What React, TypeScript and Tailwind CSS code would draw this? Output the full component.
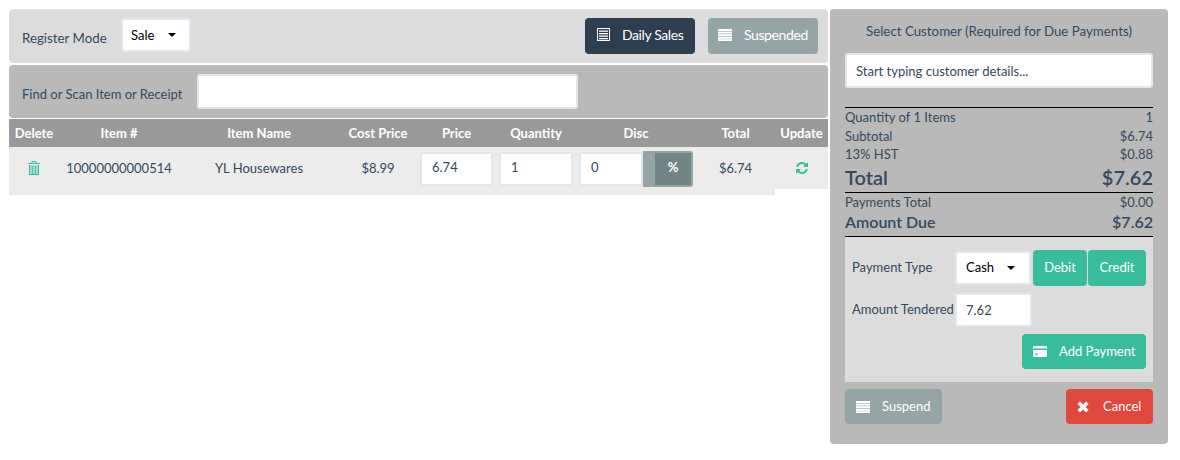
import React from 'react'

const BarsIcon = () => (
  <svg className="w-[14px] h-[12px]" viewBox="0 0 14 12" fill="white" aria-hidden="true">
    <rect x="0" y="0" width="14" height="2" />
    <rect x="0" y="2.6" width="14" height="2" />
    <rect x="0" y="5.2" width="14" height="2" />
    <rect x="0" y="7.8" width="14" height="2" />
    <rect x="0" y="10.2" width="14" height="1.8" />
  </svg>
)

const ListIcon = () => (
  <svg className="w-[13px] h-[13px]" viewBox="0 0 13 13" aria-hidden="true">
    <rect x="0.5" y="0.5" width="12" height="12" fill="none" stroke="white" />
    <rect x="2" y="2.5" width="9" height="1.3" fill="white" />
    <rect x="2" y="5" width="9" height="1.3" fill="white" />
    <rect x="2" y="7.5" width="9" height="1.3" fill="white" />
    <rect x="2" y="10" width="9" height="1.3" fill="white" />
  </svg>
)

const CardIcon = () => (
  <svg className="w-[14px] h-[11px]" viewBox="0 0 14 11" aria-hidden="true">
    <path fill="white" d="M1 0h12a1 1 0 0 1 1 1v1.5H0V1a1 1 0 0 1 1-1zM0 4h14v6a1 1 0 0 1-1 1H1a1 1 0 0 1-1-1z" />
    <rect x="2" y="7.5" width="3" height="1.2" fill="#38bc9c" />
  </svg>
)

const TrashIcon = () => (
  <svg className="w-[12px] h-[14px]" viewBox="0 0 12 14" aria-hidden="true">
    <path fill="none" stroke="#38bc9c" d="M4 2V.5h4V2" />
    <rect x="0" y="2" width="12" height="1" fill="#38bc9c" />
    <rect x="1" y="4" width="10" height="10" fill="#9fdcd8" />
    <path fill="#38bc9c" d="M1 4h1v10H1zM10 4h1v10h-1zM1 13h10v1H1z" />
    <path fill="#4fc4b4" d="M4 5h1v8H4zM7 5h1v8H7z" />
  </svg>
)

const RefreshIcon = () => (
  <svg className="w-[14px] h-[14px]" viewBox="0 0 1792 1792" fill="#38bc9c" aria-hidden="true">
    <path d="M1639 1056q0 5-1 7-64 268-268 434.5t-478 166.5q-146 0-282.5-55t-243.5-157l-129 129q-19 19-45 19t-45-19-19-45v-448q0-26 19-45t45-19h448q26 0 45 19t19 45-19 45l-137 137q71 66 161 102t187 36q134 0 250-65t186-179q11-17 53-117 8-23 30-23h192q13 0 22.5 9.5t9.5 22.5zm25-800v448q0 26-19 45t-45 19h-448q-26 0-45-19t-19-45 19-45l138-138q-148-137-349-137-134 0-250 65t-186 179q-11 17-53 117-8 23-30 23h-199q-13 0-22.5-9.5t-9.5-22.5v-7q65-268 270-434.5t480-166.5q146 0 284 55.5t245 156.5l130-129q19-19 45-19t45 19 19 45z" />
  </svg>
)

const CrossIcon = () => (
  <svg className="w-[12px] h-[12px]" viewBox="0 0 12 12" fill="none" stroke="white" strokeWidth={3.6} aria-hidden="true">
    <path d="M1.7 1.7l8.6 8.6M10.3 1.7l-8.6 8.6" />
  </svg>
)

const Caret = () => (
  <span className="w-0 h-0 border-x-[4px] border-x-transparent border-t-[4px] border-t-black" />
)

const SummaryRow = ({ label, value, className }: { label: string; value: string; className: string }) => (
  <div className={`flex justify-between ${className}`}>
    <span>{label}</span>
    <span>{value}</span>
  </div>
)

const headers = [
  { label: 'Delete', w: 'w-[50px]' },
  { label: 'Item #', w: 'w-[120px]' },
  { label: 'Item Name', w: 'w-[160px]' },
  { label: 'Cost Price', w: 'w-[78px]' },
  { label: 'Price', w: 'w-[79px]' },
  { label: 'Quantity', w: 'w-[80px]' },
  { label: 'Disc', w: 'w-[120px]' },
  { label: 'Total', w: 'w-[79px]' },
  { label: 'Update', w: 'w-[53px]' },
]

export default function App() {
  return (
    <div className="flex items-start w-[1180px] h-[460px] bg-white pt-[9px] pl-[9px] text-[13px] text-[#34495e] font-['Lato','Open_Sans',sans-serif]">
      <div className="w-[819px]">
        <div className="flex items-center justify-between h-[54px] pl-[13px] pr-[10px] bg-[#dcdcdc] rounded-[4px] border-t border-[#e4e4e4]">
          <div className="flex items-center">
            <span className="mt-[4px] w-[99px] text-[13.3px]">Register Mode</span>
            <div className="flex items-center justify-between w-[70px] h-[34px] pl-[8px] pr-[13px] -mt-[3px] bg-white border-2 border-[#e2e6ef] rounded-[3px] text-black">
              <span className="mt-[1px]">Sale</span>
              <Caret />
            </div>
          </div>
          <div className="flex items-center gap-[13px] -mt-[1px] text-white text-[14px] tracking-[-0.4px]">
            <button className="flex items-center w-[110px] h-[36px] pl-[12px] pb-[3px] bg-[#2c3e50] rounded-[4px]">
              <ListIcon />
              <span className="ml-[12px]">Daily Sales</span>
            </button>
            <button className="flex items-center w-[110px] h-[36px] pl-[10px] pb-[3px] bg-[#95a5a6] rounded-[4px]">
              <BarsIcon />
              <span className="ml-[12px]">Suspended</span>
            </button>
          </div>
        </div>

        <div className="flex items-center h-[53px] mt-[2px] pl-[13px] bg-[#b9b9b9] rounded-[4px]">
          <span className="w-[175px] mt-[6px]">Find or Scan Item or Receipt</span>
          <input className="w-[381px] h-[35px] bg-white border-2 border-[#e2e6ef] rounded-[3px]" />
        </div>

        <div className="flex items-center h-[28px] mt-[1px] pt-[1px] bg-[#999999] text-white font-bold">
          {headers.map((h) => (
            <div key={h.label} className={`${h.w} text-center`}>{h.label}</div>
          ))}
        </div>

        <div className="flex items-start">
          <div className="flex items-center w-[766px] h-[48px] pb-[7px] bg-[#ececec]">
            <div className="w-[50px] flex justify-center"><TrashIcon /></div>
            <div className="w-[120px] pt-[2px] text-center">10000000000514</div>
            <div className="w-[160px] pt-[2px] text-center">YL Housewares</div>
            <div className="w-[78px] pt-[2px] text-center">$8.99</div>
            <div className="w-[79px] flex justify-center mt-[3px]">
              <div className="w-[73px] h-[34px] pl-[10px] pb-[2px] flex items-center bg-white border-2 border-[#e2e6ef] rounded-[3px]">6.74</div>
            </div>
            <div className="w-[80px] flex justify-center mt-[3px]">
              <div className="w-[74px] h-[34px] pl-[10px] pb-[2px] flex items-center bg-white border-2 border-[#e2e6ef] rounded-[3px]">1</div>
            </div>
            <div className="w-[120px] flex pl-[3px] mt-[2px]">
              <div className="w-[64px] h-[34px] mt-[1px] pl-[10px] pb-[2px] flex items-center bg-white border-2 border-[#e2e6ef] rounded-l-[3px]">0</div>
              <div className="w-[50px] h-[36px] pl-[12px] py-[2px] pr-[2px] bg-[#95a5a6] rounded-r-[3px]">
                <div className="flex items-center justify-center h-full pb-[2px] bg-[#718585] text-white font-bold">%</div>
              </div>
            </div>
            <div className="w-[79px] pt-[2px] text-center">$6.74</div>
          </div>
          <div className="flex items-center justify-center w-[53px] h-[42px] pb-[1px] bg-[#ececec]">
            <RefreshIcon />
          </div>
        </div>
      </div>

      <div className="w-[338px] h-[435px] ml-[2px] px-[15px] bg-[#b9b9b9] rounded-[4px]">
        <div className="h-[44px] pt-[14px] leading-[16px] text-center text-[13.3px]">Select Customer (Required for Due Payments)</div>
        <div className="flex items-center h-[35px] pl-[9px] pt-[2px] bg-white border-2 border-[#e2e6ef] rounded-[3px]">
          Start typing customer details...
        </div>

        <div className="mt-[19px] border-t border-black">
          <SummaryRow label="Quantity of 1 Items" value="1" className="h-[19px] leading-[18px]" />
          <SummaryRow label="Subtotal" value="$6.74" className="h-[18px] leading-[18px]" />
          <SummaryRow label="13% HST" value="$0.88" className="h-[18px] leading-[18px]" />
          <SummaryRow label="Total" value="$7.62" className="h-[29px] leading-[28px] text-[20px] font-semibold" />
        </div>
        <div className="border-t border-black">
          <SummaryRow label="Payments Total" value="$0.00" className="h-[19px] leading-[18px]" />
          <SummaryRow label="Amount Due" value="$7.62" className="h-[24px] leading-[19px] text-[16px] font-semibold" />
        </div>

        <div className="h-[146px] border-t border-black bg-[#dcdcdc] pt-[13px] pl-[7px] pr-[7px]">
          <div className="flex items-center h-[36px]">
            <span className="w-[103px]">Payment Type</span>
            <div className="flex items-center justify-between w-[76px] h-[34px] pl-[9px] pr-[14px] bg-white border-2 border-[#e2e6ef] rounded-[3px] text-black">
              <span>Cash</span>
              <Caret />
            </div>
            <button className="w-[54px] h-[36px] ml-[2px] bg-[#38bc9c] text-white rounded-[4px]">Debit</button>
            <button className="w-[58px] h-[36px] ml-[1px] bg-[#38bc9c] text-white rounded-[4px]">Credit</button>
          </div>
          <div className="flex items-center h-[34px] mt-[7px]">
            <span className="w-[103px] whitespace-nowrap">Amount Tendered</span>
            <div className="w-[77px] h-[34px] pl-[9px] pt-[1px] flex items-center bg-white border-2 border-[#e2e6ef] rounded-[3px]">7.62</div>
          </div>
          <div className="flex justify-end mt-[7px]">
            <button className="flex items-center w-[124px] h-[35px] pl-[11px] bg-[#38bc9c] text-white rounded-[4px]">
              <CardIcon />
              <span className="ml-[12px]">Add Payment</span>
            </button>
          </div>
        </div>

        <div className="flex justify-between mt-[7px]">
          <button className="flex items-center w-[97px] h-[35px] pl-[11px] bg-[#95a5a6] text-white rounded-[4px]">
            <BarsIcon />
            <span className="ml-[12px]">Suspend</span>
          </button>
          <button className="flex items-center w-[87px] h-[35px] pl-[11px] bg-[#e0483e] text-white rounded-[4px]">
            <CrossIcon />
            <span className="ml-[14px]">Cancel</span>
          </button>
        </div>
      </div>
    </div>
  )
}
